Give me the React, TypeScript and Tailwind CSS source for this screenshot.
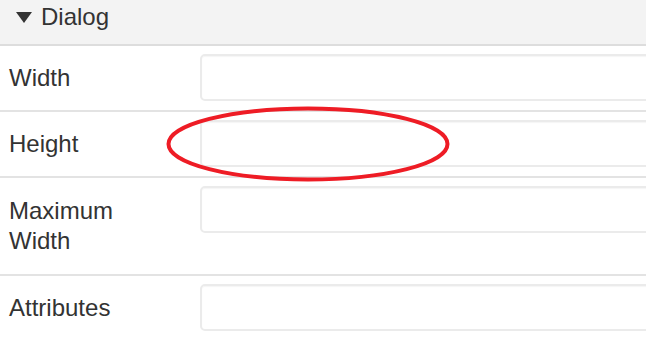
import React from "react";

type Row = { label: string; pad: string };

const rows: Row[] = [
  { label: "Width", pad: "pt-[17px] pb-[17px]" },
  { label: "Height", pad: "pt-[17px] pb-[17px]" },
  { label: "Maximum Width", pad: "pt-[18px] pb-[18px]" },
  { label: "Attributes", pad: "pt-[17px] pb-[17px]" },
];

export default function App() {
  return (
    <div className="relative w-[646px] h-[339px] overflow-hidden bg-white text-[#333333] font-['Liberation_Sans',Arial,sans-serif] text-[24px]">
      <div className="h-[46px] bg-[#f3f3f3] border-b-2 border-[#dddddd] flex items-start pl-[16px] pt-[2px]">
        <div className="h-[30px] flex items-center">
          <svg width="16" height="12" viewBox="0 0 16 12" className="mr-[9px] mt-[1px]">
            <polygon points="0,0 16,0 8,11" fill="#333333" />
          </svg>
          <span className="leading-[30px]">Dialog</span>
        </div>
      </div>
      <div className="flex flex-col">
        {rows.map((r) => (
          <div key={r.label} className="flex border-b-2 border-[#e3e3e3]">
            <div className={`w-[200px] shrink-0 pl-[9px] pr-[30px] leading-[30px] ${r.pad}`}>{r.label}</div>
            <div className="flex-1 pt-[8px] pb-[9px]">
              <div className="h-[47px] w-[470px] border-2 border-[#ebebeb] rounded-[5px] bg-white shadow-[inset_0_1px_1px_rgba(0,0,0,0.04)]" />
            </div>
          </div>
        ))}
      </div>
      <svg className="absolute left-0 top-0 pointer-events-none" width="646" height="339" viewBox="0 0 646 339">
        <ellipse cx="308" cy="144" rx="139.5" ry="35.5" fill="none" stroke="#ee1c25" strokeWidth="4" />
      </svg>
    </div>
  );
}
